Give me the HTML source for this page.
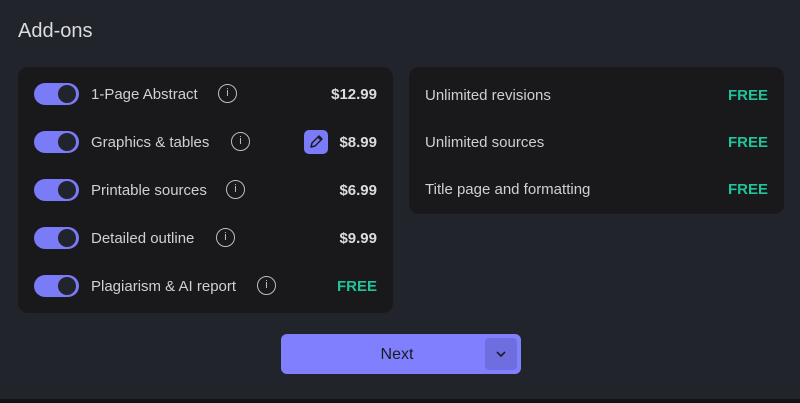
<!DOCTYPE html>
<html><head><style>
body{margin:0;width:800px;height:403px;background:#22242b;font-family:"Liberation Sans",sans-serif;position:relative;overflow:hidden;color:#d8d8dc}
.t{position:absolute;left:18px;top:20px;font-size:20px;color:#dcdce0}
.card{position:absolute;background:#19191c;border-radius:10px}
.row{position:absolute;left:0;right:0;height:24px}
.tg{position:absolute;left:16px;top:0;width:45px;height:22px;border-radius:11px;background:#7a7bf7}
.tg:after{content:"";position:absolute;right:3px;top:2px;width:18px;height:18px;border-radius:50%;background:#22242b}
.lb{position:absolute;top:3px;font-size:15px;color:#cfcfd4}
.i{position:absolute;top:1px;width:17px;height:17px;border:1.2px solid #bdbdc2;border-radius:50%;font-size:11px;text-align:center;line-height:17px;color:#bdbdc2}
.p{position:absolute;right:16px;top:3px;font-size:15px;font-weight:bold;color:#dcdce0}
.f{color:#1fc49a}
.bot{position:absolute;left:0;right:0;bottom:0;height:4px;background:#121214}
</style></head><body>
<div class="t">Add-ons</div>
<div class="card" style="left:18px;top:67px;width:375px;height:246px">
 <div class="row" style="top:16px"><div class="tg"></div><div class="lb" style="left:73px">1-Page Abstract</div><div class="i" style="left:200px">i</div><div class="p">$12.99</div></div>
 <div class="row" style="top:64px"><div class="tg"></div><div class="lb" style="left:73px">Graphics &amp; tables</div><div class="i" style="left:213px">i</div>
  <div style="position:absolute;left:286px;top:-1px;width:24px;height:24px;border-radius:5px;background:#7a7bf7"><svg width="24" height="24" viewBox="0 0 24 24"><path d="M7 17l1-4 7-7 3 3-7 7z M14 7l3 3" fill="none" stroke="#1b1b22" stroke-width="1.5" stroke-linejoin="round"/></svg></div>
  <div class="p">$8.99</div></div>
 <div class="row" style="top:112px"><div class="tg"></div><div class="lb" style="left:73px">Printable sources</div><div class="i" style="left:208px">i</div><div class="p">$6.99</div></div>
 <div class="row" style="top:160px"><div class="tg"></div><div class="lb" style="left:73px">Detailed outline</div><div class="i" style="left:198px">i</div><div class="p">$9.99</div></div>
 <div class="row" style="top:208px"><div class="tg"></div><div class="lb" style="left:73px">Plagiarism &amp; AI report</div><div class="i" style="left:239px">i</div><div class="p f">FREE</div></div>
</div>
<div class="card" style="left:409px;top:67px;width:375px;height:147px">
 <div class="row" style="top:17px"><div class="lb" style="left:16px">Unlimited revisions</div><div class="p f">FREE</div></div>
 <div class="row" style="top:64px"><div class="lb" style="left:16px">Unlimited sources</div><div class="p f">FREE</div></div>
 <div class="row" style="top:111px"><div class="lb" style="left:16px">Title page and formatting</div><div class="p f">FREE</div></div>
</div>
<div style="position:absolute;left:281px;top:334px;width:240px;height:40px;border-radius:6px;background:#8080ff">
 <div style="position:absolute;left:0;width:232px;top:12px;text-align:center;font-size:16px;color:#1b1b22">Next</div>
 <div style="position:absolute;left:204px;top:4px;width:32px;height:32px;border-radius:4px;background:#6e6ee0"><svg width="32" height="32"><path d="M12 14l4 4 4-4" fill="none" stroke="#1b1b22" stroke-width="1.6"/></svg></div>
</div>
<div class="bot"></div>
</body></html>
